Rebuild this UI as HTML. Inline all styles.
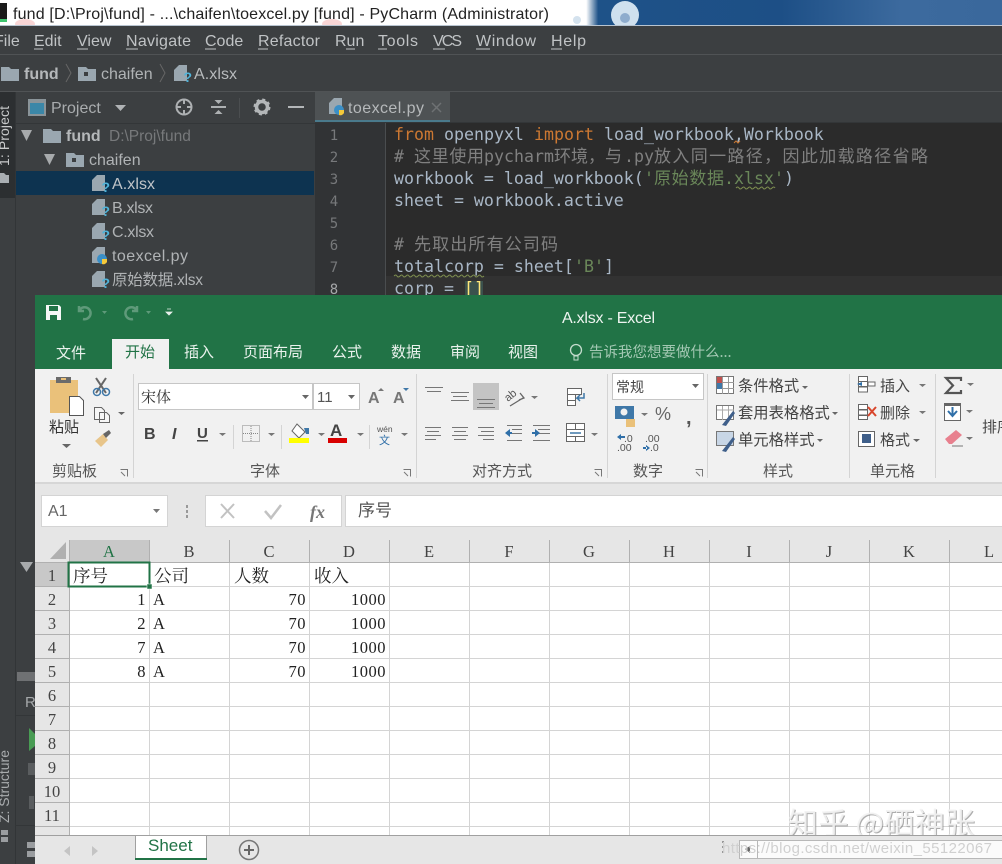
<!DOCTYPE html>
<html><head><meta charset="utf-8"><style>
html,body{margin:0;padding:0;background:#3c3f41;width:1002px;height:864px;overflow:hidden}
svg{display:block}
text{white-space:pre}
.s{font-family:"Liberation Sans","Noto Sans CJK SC",sans-serif}
.m{font-family:"DejaVu Sans Mono","Noto Sans CJK SC",monospace;font-size:16.6px}
.c{font-family:"Noto Sans CJK SC",sans-serif}
.z{font-family:"Liberation Serif","Noto Serif CJK SC",serif;font-size:16.5px;letter-spacing:.5px;fill:#222}
.h{font-family:"Liberation Serif",serif;font-size:16.5px;fill:#444;text-anchor:middle}
.sc{font-family:"Noto Serif CJK SC",serif;font-size:17.5px;fill:#222}
.mn{fill:#c0c3c5;font-size:16px}
.g{fill:#77797b;font-size:14px;font-family:"DejaVu Sans Mono",monospace;text-anchor:middle}
.l{stroke:#666;stroke-width:1;fill:none}
</style></head><body>
<svg width="1002" height="864" viewBox="0 0 1002 864" xmlns="http://www.w3.org/2000/svg">
<defs>
<linearGradient id="tb" x1="0" x2="1" y1="0" y2="0">
<stop offset="0" stop-color="#ffffff"/><stop offset=".585" stop-color="#ffffff"/><stop offset=".597" stop-color="#1e5288"/><stop offset=".78" stop-color="#1d4f86"/><stop offset=".9" stop-color="#3c6a9e"/><stop offset="1" stop-color="#3a689c"/>
</linearGradient>
<g id="fq"><path d="M0 5l5-5h8v16H0z" fill="#9aa7b0"/><text x="9.500" y="17" font-size="14" font-weight="bold" fill="#4fb4da" class="s">?</text></g>
<g id="fp"><path d="M0 5l5-5h8v16H0z" fill="#9aa7b0"/><circle cx="10" cy="12" r="5" fill="#3a8fc7"/><path d="M10 12h5v3a4 4 0 0 1-5 2z" fill="#f5c93a"/></g>
</defs>

<!-- title bar -->
<rect width="1002" height="25" fill="url(#tb)"/>
<ellipse cx="25" cy="24" rx="10" ry="5" fill="#f6c4c4" opacity=".7"/><ellipse cx="332" cy="24" rx="10" ry="5" fill="#f6c4c4" opacity=".7"/>
<circle cx="625" cy="15" r="14" fill="#cfe0ee"/><circle cx="625" cy="18" r="5" fill="#8eaccd"/>
<circle cx="577" cy="20" r="4" fill="#d4e2ee"/>
<rect x="0" y="25" width="1002" height="1" fill="#b8c4d0"/>
<rect x="0" y="3" width="7" height="19" fill="#1a1a1a"/><rect x="0" y="19" width="7" height="3" fill="#3fc46f"/>
<text class="s" x="13" y="19" font-size="16" fill="#222" textLength="536" lengthAdjust="spacing">fund [D:\Proj\fund] - ...\chaifen\toexcel.py [fund] - PyCharm (Administrator)</text>

<!-- menu -->
<rect y="26" width="1002" height="28" fill="#3c3f41"/>
<rect y="54" width="1002" height="1" fill="#505355"/>
<g class="s mn">
<text x="-6" y="46" fill="#c0c3c5">File</text><text x="34" y="46" fill="#c0c3c5">Edit</text><text x="77" y="46" fill="#c0c3c5">View</text><text x="126" y="46" fill="#c0c3c5" textLength="65">Navigate</text><text x="205" y="46" fill="#c0c3c5">Code</text><text x="258" y="46" fill="#c0c3c5" textLength="62">Refactor</text><text x="335" y="46" fill="#c0c3c5">Run</text><text x="378" y="46" fill="#c0c3c5" textLength="40">Tools</text><text x="433" y="46" fill="#c0c3c5" textLength="29">VCS</text><text x="476" y="46" fill="#c0c3c5" textLength="60">Window</text><text x="551" y="46" fill="#c0c3c5" textLength="35">Help</text>
</g>
<path d="M34 49h9M77 49h11M126 49h12M205 49h11M258 49h10M346 49h9M378 49h9M433 49h12M476 49h14M551 49h11" stroke="#c0c3c5" stroke-width="1"/>

<!-- breadcrumb -->
<rect y="55" width="1002" height="36" fill="#3c3f41"/>
<rect y="91" width="1002" height="1" fill="#505355"/>
<path d="M1 67h8l2 2h8v12H1z" fill="#9aa7b0"/>
<text class="s" x="24" y="79" font-size="16" font-weight="bold" fill="#b5b8ba">fund</text>
<path d="M66 64l5 9-5 9" class="l"/>
<path d="M78 67h8l2 2h8v12H78z" fill="#9aa7b0"/><rect x="84" y="72" width="4" height="4" fill="#3c3f41"/>
<text class="s" x="101" y="79" font-size="16" fill="#b0b3b5">chaifen</text>
<path d="M160 64l5 9-5 9" class="l"/>
<use href="#fq" x="174" y="65"/>
<text class="s" x="194" y="79" font-size="16" fill="#b8bbbd" textLength="43">A.xlsx</text>

<!-- left strip -->
<rect x="0" y="92" width="15" height="106" fill="#2c2f31"/>
<rect x="15" y="92" width="1" height="772" fill="#323537"/>
<text class="s" transform="translate(9,166) rotate(-90)" font-size="14" fill="#c8cacb" textLength="60">1: Project</text>
<path d="M0 173h4l2 2h3v8H0z" fill="#a9aeb2"/>

<!-- project toolbar -->
<rect x="16" y="92" width="299" height="31" fill="#3c3f41"/>
<rect x="28" y="99" width="18" height="17" fill="#8a9499"/><rect x="30" y="103" width="14" height="11" fill="#3b87a8"/>
<text class="s" x="51" y="113" font-size="16" fill="#a9acae">Project</text>
<path d="M115 105h11l-5.500 6z" fill="#b0b3b5"/>
<circle cx="184" cy="107" r="7.500" fill="none" stroke="#adb0b2" stroke-width="2"/><path d="M184 99v5M184 110v5M176 107h5M187 107h5" stroke="#adb0b2" stroke-width="2"/>
<path d="M211 107h15" stroke="#adb0b2" stroke-width="2"/><path d="M218.500 104l-4-4h8zM218.500 110l-4 4h8z" fill="#adb0b2"/>
<rect x="239" y="98" width="1" height="20" fill="#4b4e50"/>
<circle cx="262" cy="107" r="5.500" fill="none" stroke="#b3b6b8" stroke-width="3.500"/><circle cx="262" cy="107" r="7.500" fill="none" stroke="#b3b6b8" stroke-width="2" stroke-dasharray="3 2.890"/>
<path d="M288 107h16" stroke="#b3b6b8" stroke-width="2"/>
<rect x="16" y="123" width="299" height="1" fill="#333638"/>

<!-- project tree -->
<rect x="16" y="124" width="298" height="171" fill="#3c3f41"/>
<rect x="16" y="171" width="298" height="24" fill="#0d3350"/>
<path d="M21 130h11l-5.500 11zM44 154h11l-5.500 11z" fill="#a7aaac"/>
<path d="M43 129h8l2 2h8v12H43z" fill="#9aa7b0"/>
<text class="s" x="66" y="141" font-size="16" font-weight="bold" fill="#b5b8ba">fund</text>
<text class="s" x="109" y="141" font-size="15.500" fill="#77797b">D:\Proj\fund</text>
<path d="M66 153h8l2 2h8v12H66z" fill="#9aa7b0"/><rect x="72" y="158" width="4" height="4" fill="#3c3f41"/>
<text class="s" x="89" y="165" font-size="16" fill="#b0b3b5">chaifen</text>
<use href="#fq" x="92" y="175"/><use href="#fq" x="92" y="199"/><use href="#fq" x="92" y="223"/><use href="#fp" x="92" y="247"/><use href="#fq" x="92" y="271"/>
<text class="s" x="112" y="189" font-size="16" fill="#c0c4c8" textLength="43">A.xlsx</text>
<text class="s" x="112" y="213" font-size="16" fill="#b0b3b5" textLength="41">B.xlsx</text>
<text class="s" x="112" y="237" font-size="16" fill="#b0b3b5" textLength="42">C.xlsx</text>
<text class="s" x="112" y="261" font-size="16" fill="#b0b3b5" textLength="76">toexcel.py</text>
<text class="s" x="112" y="285" font-size="15.500" fill="#b0b3b5" textLength="91">原始数据.xlsx</text>

<!-- editor tabs -->
<rect x="315" y="92" width="687" height="31" fill="#3c3f41"/>
<rect x="315" y="92" width="135" height="31" fill="#4e5254"/>
<rect x="315" y="120" width="135" height="3" fill="#4a7a8c"/>
<rect x="315" y="122" width="687" height="1" fill="#333638"/>
<use href="#fp" x="329" y="98"/>
<text class="s" x="348" y="113" font-size="16" fill="#b6b9bb" textLength="76">toexcel.py</text>
<path d="M432 103l9 9M441 103l-9 9" stroke="#6e7173" stroke-width="1.500"/>

<!-- editor -->
<rect x="315" y="123" width="687" height="172" fill="#2b2b2b"/>
<rect x="315" y="123" width="70" height="172" fill="#313335"/>
<rect x="385" y="123" width="1" height="172" fill="#4a4d4f"/>
<rect x="386" y="276" width="616" height="19" fill="#323232"/>
<text class="g" x="334" y="140">1</text><text class="g" x="334" y="162">2</text><text class="g" x="334" y="184">3</text><text class="g" x="334" y="206">4</text><text class="g" x="334" y="228">5</text><text class="g" x="334" y="250">6</text><text class="g" x="334" y="272">7</text><text class="g" x="334" y="294" style="fill:#a5a7a9">8</text>

<text class="m" y="140"><tspan x="394" fill="#cc7832">from</tspan><tspan x="444" fill="#a9b7c6">openpyxl</tspan><tspan x="534" fill="#cc7832">import</tspan><tspan x="604" fill="#a9b7c6">load_workbook,Workbook</tspan></text>
<path d="M734 143l2-2 2 2 2-2" stroke="#cc7832" fill="none"/>
<text class="m" y="162" fill="#808080"><tspan x="394">#</tspan><tspan x="414" font-size="17" textLength="70">这里使用</tspan><tspan x="484">pycharm</tspan><tspan x="554" font-size="17" textLength="68">环境，与</tspan><tspan x="624">.py</tspan><tspan x="654" font-size="17" textLength="274">放入同一路径，因此加载路径省略</tspan></text>
<text class="m" y="184" fill="#a9b7c6"><tspan x="394">workbook = load_workbook(</tspan><tspan x="644" fill="#6a8759">'</tspan><tspan x="654" fill="#6a8759" font-size="17" textLength="70">原始数据</tspan><tspan x="724" fill="#6a8759">.xlsx'</tspan><tspan x="784">)</tspan></text>
<path d="M736 188q2-2 3 0t3 0 3 0 3 0 3 0 3 0 3 0 3 0 3 0 3 0 3 0 3 0 3 0" stroke="#7f8f50" fill="none"/>
<text class="m" x="394" y="206" fill="#a9b7c6">sheet = workbook.active</text>
<text class="m" y="250" fill="#808080"><tspan x="394">#</tspan><tspan x="414" font-size="17" textLength="144">先取出所有公司码</tspan></text>
<text class="m" y="272" fill="#a9b7c6"><tspan x="394">totalcorp = sheet[</tspan><tspan x="574" fill="#6a8759">'B'</tspan><tspan x="604">]</tspan></text>
<path d="M394 276q2-2 3 0t3 0 3 0 3 0 3 0 3 0 3 0 3 0 3 0 3 0 3 0 3 0 3 0 3 0 3 0 3 0 3 0 3 0 3 0 3 0 3 0 3 0 3 0 3 0 3 0 3 0 3 0 3 0 3 0 3 0" stroke="#7f8f50" fill="none"/>
<rect x="465" y="281" width="18" height="14" fill="#3b514d"/>
<text class="m" y="294" fill="#a9b7c6"><tspan x="394">corp = </tspan><tspan x="464" fill="#ffe87a">[]</tspan></text>

<!-- area left of Excel below -->
<rect x="0" y="295" width="35" height="569" fill="#3c3f41"/>
<rect x="15" y="295" width="1" height="569" fill="#323537"/>
<path d="M20 562h13l-6.500 10z" fill="#a7aaac"/>
<rect x="17" y="672" width="18" height="9" fill="#6f7173"/>
<text class="s" x="25" y="707" font-size="15" fill="#a5a8aa">R</text>
<rect x="16" y="715" width="19" height="1" fill="#333638"/>
<path d="M29 728l6 6v12l-6 5z" fill="#499c54"/>
<rect x="28" y="763" width="7" height="12" fill="#5a5d5f"/><rect x="29" y="796" width="5" height="13" fill="#5a5d5f"/>
<text class="s" transform="translate(9,823) rotate(-90)" font-size="14" fill="#a9acae" textLength="73">Z: Structure</text>
<rect y="825" x="15" width="20" height="1" fill="#333638"/>
<rect x="1" y="830" width="7" height="5" fill="#9a9da0"/><rect x="1" y="837" width="7" height="5" fill="#9a9da0"/><rect x="27" y="842" width="8" height="6" fill="#9a9da0"/><rect x="27" y="851" width="8" height="6" fill="#9a9da0"/>

<!-- Excel -->
<rect x="35" y="295" width="967" height="569" fill="#ffffff"/>
<rect x="35" y="295" width="967" height="74" fill="#217346"/>
<path d="M46 305h13l2 2v13H46z" fill="#f5f7f6"/><rect x="49" y="306" width="9" height="5" fill="#217346"/><rect x="50" y="315" width="7" height="5" fill="#217346"/>
<path d="M79 311a6 6 0 1 1 4 8M79 306v5h5" fill="none" stroke="#5f9a7a" stroke-width="2.500"/><path d="M102 311h5l-2.500 3z" fill="#5f9a7a"/>
<path d="M137 311a6 6 0 1 0-4 8M137 306v5h-5" fill="none" stroke="#5f9a7a" stroke-width="2.500"/><path d="M146 311h5l-2.500 3z" fill="#5f9a7a"/>
<path d="M167 309h4M166 312h6l-3 3z" fill="#e8efeb" stroke="#e8efeb" stroke-width=".8"/>
<text class="s" x="562" y="323" font-size="16" fill="#eef4f0" textLength="93">A.xlsx - Excel</text>

<rect x="112" y="339" width="57" height="31" fill="#f1f1f1"/>
<g class="c" font-size="15" fill="#eaf2ed">
<text x="56" y="358">文件</text>
<text x="125" y="357" fill="#217346">开始</text>
<text x="184" y="357">插入</text>
<text x="243" y="357">页面布局</text>
<text x="332" y="357">公式</text>
<text x="391" y="357">数据</text>
<text x="450" y="357">审阅</text>
<text x="508" y="357">视图</text>
<text x="589" y="357" font-size="14.500" fill="#a3c8b3">告诉我您想要做什么...</text>
</g>
<circle cx="576" cy="350" r="5.500" fill="none" stroke="#c4dccd" stroke-width="1.300"/><path d="M574 356h4v4h-4z" fill="none" stroke="#c4dccd"/>

<!-- ribbon -->
<rect x="35" y="369" width="967" height="113" fill="#f1f1f1"/>
<rect x="35" y="482" width="967" height="2" fill="#d6d6d6"/>
<path d="M133.500 374v104M416.500 374v104M607.500 374v104M707.500 374v104M849.500 374v104M935.500 374v104" stroke="#d4d4d4"/>
<!-- clipboard -->
<rect x="50" y="380" width="28" height="33" fill="#eac17a"/><rect x="56" y="377" width="15" height="6" fill="#6b6b6b"/><rect x="61" y="378" width="5" height="2" fill="#eac17a"/>
<path d="M69.500 396.500h10l4 4v15h-14z" fill="#fff" stroke="#555"/>
<text class="c" x="49" y="432" font-size="15" fill="#333">粘贴</text>
<path d="M62 444h9l-4.500 4z" fill="#666"/>
<path d="M96 378l10 15M106 378l-10 15" stroke="#666" stroke-width="2"/><circle cx="97" cy="392" r="3.500" fill="none" stroke="#3f78a8" stroke-width="1.500"/><circle cx="106" cy="392" r="3.500" fill="none" stroke="#3f78a8" stroke-width="1.500"/>
<path d="M94.500 407.500h7l3 3v9h-10zM99.500 412.500h7l3 3v7h-10z" fill="#f6f6f6" stroke="#666"/>
<path d="M118 412h7l-3.500 3z" fill="#666"/>
<path d="M95 441l8-7 5 6-7 7z" fill="#e8c58a"/><path d="M103 434l6-4 2 3-5 5z" fill="#666"/>
<text class="c" x="52" y="476" font-size="15" fill="#555">剪贴板</text>
<path d="M120.500 469.500h7v7M121 472l4 4" fill="none" stroke="#777"/>
<!-- font -->
<rect x="138.500" y="383.500" width="174" height="26" fill="#fff" stroke="#c6c6c6"/>
<rect x="313.500" y="383.500" width="46" height="26" fill="#fff" stroke="#c6c6c6"/>
<text x="141" y="402" font-family="Noto Serif CJK SC,serif" font-size="15" fill="#333">宋体</text>
<path d="M302 395h7l-3.500 4zM348 395h7l-3.500 4z" fill="#666"/>
<text class="s" x="317" y="402" font-size="15" fill="#555">11</text>
<text class="s" x="368" y="403" font-size="16" font-weight="bold" fill="#777">A</text><path d="M378 391l3-3 3 3z" fill="#777"/>
<text class="s" x="393" y="403" font-size="16" font-weight="bold" fill="#777">A</text><path d="M403 388l3 3 3-3z" fill="#3f78a8"/>
<text x="144" y="439" font-family="Liberation Sans,sans-serif" font-size="16" font-weight="bold" fill="#444">B</text>
<text x="172" y="439" font-family="Liberation Sans,sans-serif" font-size="16" font-weight="bold" font-style="italic" fill="#444">I</text>
<text x="197" y="438" font-family="Liberation Sans,sans-serif" font-size="15" font-weight="bold" fill="#444">U</text><rect x="197" y="440" width="11" height="1.500" fill="#444"/>
<path d="M219 433h7l-3.500 3zM268 433h7l-3.500 3zM318 433h7l-3.500 3zM357 433h7l-3.500 3zM401 433h7l-3.500 3z" fill="#777"/>
<path d="M233.500 425v24M281.500 425v24M369.500 425v24" stroke="#d4d4d4"/>
<path d="M242.500 425.500h17v16h-17zM251 426v15M243 433.500h16" fill="none" stroke="#888" stroke-dasharray="1 1"/>
<path d="M297 424l8 8-6 6-7-7z" fill="#fff" stroke="#666"/><path d="M304 428h5v6h-3z" fill="#3f78a8"/><rect x="289" y="438" width="20" height="5" fill="#ffff00"/>
<text class="s" x="330" y="436" font-size="17" font-weight="bold" fill="#444">A</text><rect x="328" y="438" width="19" height="5" fill="#d80000"/>
<text class="s" x="377" y="432" font-size="8.500" fill="#555">wén</text><text class="c" x="379" y="444" font-size="11" fill="#2f6fa8">文</text>
<text class="c" x="250" y="476" font-size="15" fill="#555">字体</text>
<path d="M403.500 469.500h7v7M404 472l4 4" fill="none" stroke="#777"/>
<!-- align -->
<rect x="473" y="383" width="26" height="27" fill="#c4c4c4"/>
<path d="M425 387.500h18M427 391.500h14M451 392.500h18M453 396.500h14M451 400.500h18M477 399.500h18M479 403.500h14M477 407.500h18" stroke="#777"/>
<path d="M425 427.500h16M427 431.500h12M425 435.500h16M425 439.500h11M452 427.500h16M454 431.500h12M452 435.500h16M454 439.500h12M478 427.500h16M481 431.500h13M478 435.500h16M483 439.500h11" stroke="#777"/>
<text class="s" transform="translate(508,402) rotate(-40)" font-size="11" fill="#555">ab</text>
<path d="M510 406l13-8M520 393l4 5-5 2" fill="none" stroke="#666" stroke-width="1.300"/>
<path d="M531 396h7l-3.500 3z" fill="#777"/>
<path d="M507 425.500h15M512 429.500h10M512 433.500h10M507 440.500h15M533 425.500h17M538 429.500h12M538 433.500h12M533 440.500h17" stroke="#777"/>
<path d="M505 433l5-4v8zM510 432h2v2h-2zM540 433l-5-4v8zM532 432h3v2h-3z" fill="#2f6fa8"/>
<path d="M567.500 388.500h14v6h-14zM567.500 394.500h8v6h-8zM567.500 400.500h8v5h-8z" fill="#fff" stroke="#666"/><path d="M584 393v5h-7l3-3m-3 3l3 3" fill="none" stroke="#3f78a8" stroke-width="1.500"/>
<rect x="566.500" y="423.500" width="18" height="18" fill="#fff" stroke="#666"/><path d="M567 429.500h17M567 436.500h17M575.500 423v6M575.500 437v5" stroke="#666"/><path d="M570 433h11" stroke="#3f78a8" stroke-width="1.500"/>
<path d="M591 433h7l-3.500 3z" fill="#777"/>
<text class="c" x="472" y="476" font-size="15" fill="#555">对齐方式</text>
<path d="M594.500 469.500h7v7M595 472l4 4" fill="none" stroke="#777"/>
<!-- number -->
<rect x="612.500" y="373.500" width="91" height="26" fill="#fff" stroke="#c6c6c6"/>
<text class="c" x="616" y="392" font-size="14" fill="#444">常规</text>
<path d="M692 384h7l-3.500 4z" fill="#666"/>
<rect x="615" y="406" width="19" height="13" fill="#3f78a8"/><circle cx="624" cy="412" r="3.500" fill="#f1f1f1"/><path d="M626 419h9v8h-9z" fill="#eac17a"/>
<path d="M641 413h7l-3.500 3z" fill="#777"/>
<text class="s" x="655" y="420" font-size="18" fill="#666">%</text>
<text class="s" x="686" y="424" font-size="20" font-weight="bold" fill="#555">,</text>
<text class="s" x="624" y="442" font-size="10.500" fill="#555">.0</text><text class="s" x="617" y="451" font-size="10.500" fill="#555">.00</text>
<text class="s" x="645" y="442" font-size="10.500" fill="#555">.00</text><text class="s" x="650" y="451" font-size="10.500" fill="#555">.0</text>
<path d="M617 437l4-3v6zM621 436h4v2h-4zM650 448l-4-3v6zM643 447h4v2h-4z" fill="#2f6fa8"/>
<text class="c" x="633" y="476" font-size="15" fill="#555">数字</text>
<path d="M695.500 469.500h7v7M696 472l4 4" fill="none" stroke="#777"/>
<!-- styles -->
<rect x="716.500" y="376.500" width="17" height="17" fill="#fff" stroke="#777"/><path d="M717 382.500h17M717 388.500h17M722.500 377v17M728.500 377v17" stroke="#999"/><rect x="717" y="377" width="5" height="6" fill="#c0504d"/><rect x="717" y="383" width="5" height="6" fill="#3f78a8"/>
<text class="c" x="738" y="391" font-size="15.300" fill="#444">条件格式</text><path d="M802 386h6l-3 3z" fill="#666"/>
<rect x="716.500" y="405.500" width="17" height="14" fill="#fff" stroke="#777"/><path d="M717 410h17M722.500 406v14M728.500 406v14" stroke="#aaa"/><path d="M722 425l11-14 2 2-9 13z" fill="#3f5f8a"/>
<text class="c" x="738" y="418" font-size="15.300" fill="#444">套用表格格式</text><path d="M832 412h6l-3 3z" fill="#666"/>
<rect x="716.500" y="431.500" width="17" height="14" fill="#c8d6e6" stroke="#777"/><path d="M722 451l11-14 2 2-9 13z" fill="#3f5f8a"/>
<text class="c" x="738" y="445" font-size="15.300" fill="#444">单元格样式</text><path d="M817 439h6l-3 3z" fill="#666"/>
<text class="c" x="763" y="476" font-size="15" fill="#555">样式</text>
<!-- cells -->
<path d="M858.500 376.500h9v5h-9zM858.500 381.500h9v5h-9zM858.500 387h9v5h-9zM868 382h7v4h-7z" fill="#fff" stroke="#666"/><path d="M857 384l5-2v4z" fill="#2f6fa8"/>
<text class="c" x="880" y="391" font-size="15" fill="#444">插入</text><path d="M919 384h7l-3.500 3z" fill="#777"/>
<path d="M858.500 404.500h9v5h-9zM858.500 410h9v5h-9zM858.500 415.500h9v4h-9z" fill="#fff" stroke="#666"/><path d="M868 407l8 9M876 407l-8 9" stroke="#d8452b" stroke-width="2"/>
<text class="c" x="880" y="418" font-size="15" fill="#444">删除</text><path d="M919 411h7l-3.500 3z" fill="#777"/>
<rect x="858.500" y="431.500" width="16" height="15" fill="#fff" stroke="#666"/><rect x="862" y="434" width="9" height="9" fill="#3f5f8a"/>
<text class="c" x="880" y="445" font-size="15" fill="#444">格式</text><path d="M913 439h7l-3.500 3z" fill="#666"/>
<text class="c" x="870" y="476" font-size="15" fill="#555">单元格</text>
<!-- edit -->
<path d="M961 381v-3h-15l7 7.500-7 7.500h15v-3" fill="none" stroke="#555" stroke-width="2.200"/><path d="M967 383h7l-3.500 3z" fill="#777"/>
<rect x="944.500" y="403.500" width="16" height="17" fill="#fff" stroke="#666"/><rect x="944" y="403" width="17" height="3" fill="#666"/><path d="M952.500 407v8M948 411l4.500 5 4.500-5" fill="none" stroke="#2f6fa8" stroke-width="2"/><path d="M966 410h7l-3.500 3z" fill="#777"/>
<path d="M945 439l11-9 6 5-10 9h-3z" fill="#e8808e"/><path d="M952 446h11" stroke="#777"/><path d="M966 437h7l-3.500 3z" fill="#777"/>
<text class="c" x="982" y="432" font-size="15" fill="#444">排序</text>

<!-- formula bar -->
<rect x="35" y="484" width="967" height="56" fill="#e6e6e6"/>
<rect x="41.500" y="495.500" width="126" height="31" fill="#fff" stroke="#d4d4d4"/>
<text class="s" x="48" y="516" font-size="16" fill="#666">A1</text>
<path d="M153 509h7l-3.500 4z" fill="#777"/>
<path d="M186 505h2v3h-2zM186 510h2v3h-2zM186 515h2v3h-2z" fill="#999"/>
<rect x="205.500" y="495.500" width="136" height="31" fill="#fff" stroke="#d4d4d4"/>
<rect x="345.500" y="495.500" width="680" height="31" fill="#fff" stroke="#d4d4d4"/>
<path d="M221 504l13 14M234 504l-13 14" stroke="#c2c2c2" stroke-width="2"/>
<path d="M265 511l6 7 10-13" fill="none" stroke="#c2c2c2" stroke-width="2.500"/>
<text x="310" y="518" font-family="Liberation Serif,serif" font-size="18" font-weight="bold" font-style="italic" fill="#777">fx</text>
<text class="c" x="358" y="516" font-size="17" fill="#555">序号</text>

<!-- grid -->
<rect x="35" y="540" width="967" height="22" fill="#e6e6e6"/>
<rect x="35" y="562" width="34" height="273" fill="#e6e6e6"/>
<rect x="69" y="540" width="81" height="22" fill="#c8c8c8"/>
<rect x="35" y="563" width="34" height="23" fill="#c8c8c8"/>
<path d="M66 542v17H50z" fill="#b0b0b0"/>
<g stroke="#d4d4d4">
<path d="M149.500 562v273M229.500 562v273M309.500 562v273M389.500 562v273M469.500 562v273M549.500 562v273M629.500 562v273M709.500 562v273M789.500 562v273M869.500 562v273M949.500 562v273"/>
<path d="M69 586.500h933M69 610.500h933M69 634.500h933M69 658.500h933M69 682.500h933M69 706.500h933M69 730.500h933M69 754.500h933M69 778.500h933M69 802.500h933M69 826.500h933"/>
</g>
<g stroke="#b0b0b0">
<path d="M149.500 540v22M229.500 540v22M309.500 540v22M389.500 540v22M469.500 540v22M549.500 540v22M629.500 540v22M709.500 540v22M789.500 540v22M869.500 540v22M949.500 540v22"/>
<path d="M69.500 540v295M35 562.500h967M35 586.500h34M35 610.500h34M35 634.500h34M35 658.500h34M35 682.500h34M35 706.500h34M35 730.500h34M35 754.500h34M35 778.500h34M35 802.500h34M35 826.500h34"/>
</g>
<text class="h" x="109" y="557" style="fill:#217346">A</text><text class="h" x="189" y="557">B</text><text class="h" x="269" y="557">C</text><text class="h" x="349" y="557">D</text><text class="h" x="429" y="557">E</text><text class="h" x="509" y="557">F</text><text class="h" x="589" y="557">G</text><text class="h" x="669" y="557">H</text><text class="h" x="749" y="557">I</text><text class="h" x="829" y="557">J</text><text class="h" x="909" y="557">K</text><text class="h" x="989" y="557">L</text>
<text class="h" x="52" y="581">1</text><text class="h" x="52" y="605">2</text><text class="h" x="52" y="629">3</text><text class="h" x="52" y="653">4</text><text class="h" x="52" y="677">5</text><text class="h" x="52" y="701">6</text><text class="h" x="52" y="725">7</text><text class="h" x="52" y="749">8</text><text class="h" x="52" y="773">9</text><text class="h" x="52" y="797">10</text><text class="h" x="52" y="821">11</text>
<rect x="68.500" y="562.500" width="81" height="24" fill="none" stroke="#217346" stroke-width="2"/>
<rect x="147" y="584" width="5" height="5" fill="#217346" stroke="#fff" stroke-width=".5"/>
<text class="sc" x="73" y="582">序号</text><text class="sc" x="154" y="582">公司</text><text class="sc" x="234" y="582">人数</text><text class="sc" x="314" y="582">收入</text>
<g text-anchor="end">
<text class="z" x="146" y="605">1</text><text class="z" x="146" y="629">2</text><text class="z" x="146" y="653">7</text><text class="z" x="146" y="677">8</text>
<text class="z" x="306" y="605">70</text><text class="z" x="306" y="629">70</text><text class="z" x="306" y="653">70</text><text class="z" x="306" y="677">70</text>
<text class="z" x="386" y="605">1000</text><text class="z" x="386" y="629">1000</text><text class="z" x="386" y="653">1000</text><text class="z" x="386" y="677">1000</text>
</g>
<text class="z" x="153" y="605">A</text><text class="z" x="153" y="629">A</text><text class="z" x="153" y="653">A</text><text class="z" x="153" y="677">A</text>

<!-- watermark -->
<text class="c" x="789" y="835" font-size="30" fill="#777" opacity=".6" textLength="187">知乎 @硒神张</text>
<text class="c" x="788" y="834" font-size="30" fill="#f2f2f2" opacity=".92" textLength="187">知乎 @硒神张</text>

<!-- sheet tabs -->
<rect x="35" y="835" width="967" height="29" fill="#e6e6e6"/>
<rect x="35" y="835" width="967" height="1" fill="#a0a0a0"/>
<rect x="135.500" y="835.500" width="71" height="23" fill="#fff" stroke="#a0a0a0"/>
<rect x="135" y="858" width="72" height="2" fill="#217346"/>
<text class="s" x="148" y="851" font-size="17" fill="#217346">Sheet</text>
<path d="M70 846l-6 5 6 5zM92 846l6 5-6 5z" fill="#c4c4c4"/>
<circle cx="249" cy="850" r="9.500" fill="none" stroke="#777" stroke-width="1.500"/><path d="M249 845v10M244 850h10" stroke="#666" stroke-width="2"/>
<rect x="739.500" y="840.500" width="263" height="18" fill="#fbfbfb" stroke="#b8b8b8"/>
<path d="M757.500 841v17" stroke="#b8b8b8"/>
<path d="M745 849l5-3v7z" fill="#666"/>
<path d="M722 841h2v2h-2zM722 846h2v2h-2zM722 851h2v2h-2z" fill="#999"/>
<text class="s" x="722" y="853" font-size="15" fill="#d0d0d0" textLength="270">https://blog.csdn.net/weixin_55122067</text>
</svg>
</body></html>
